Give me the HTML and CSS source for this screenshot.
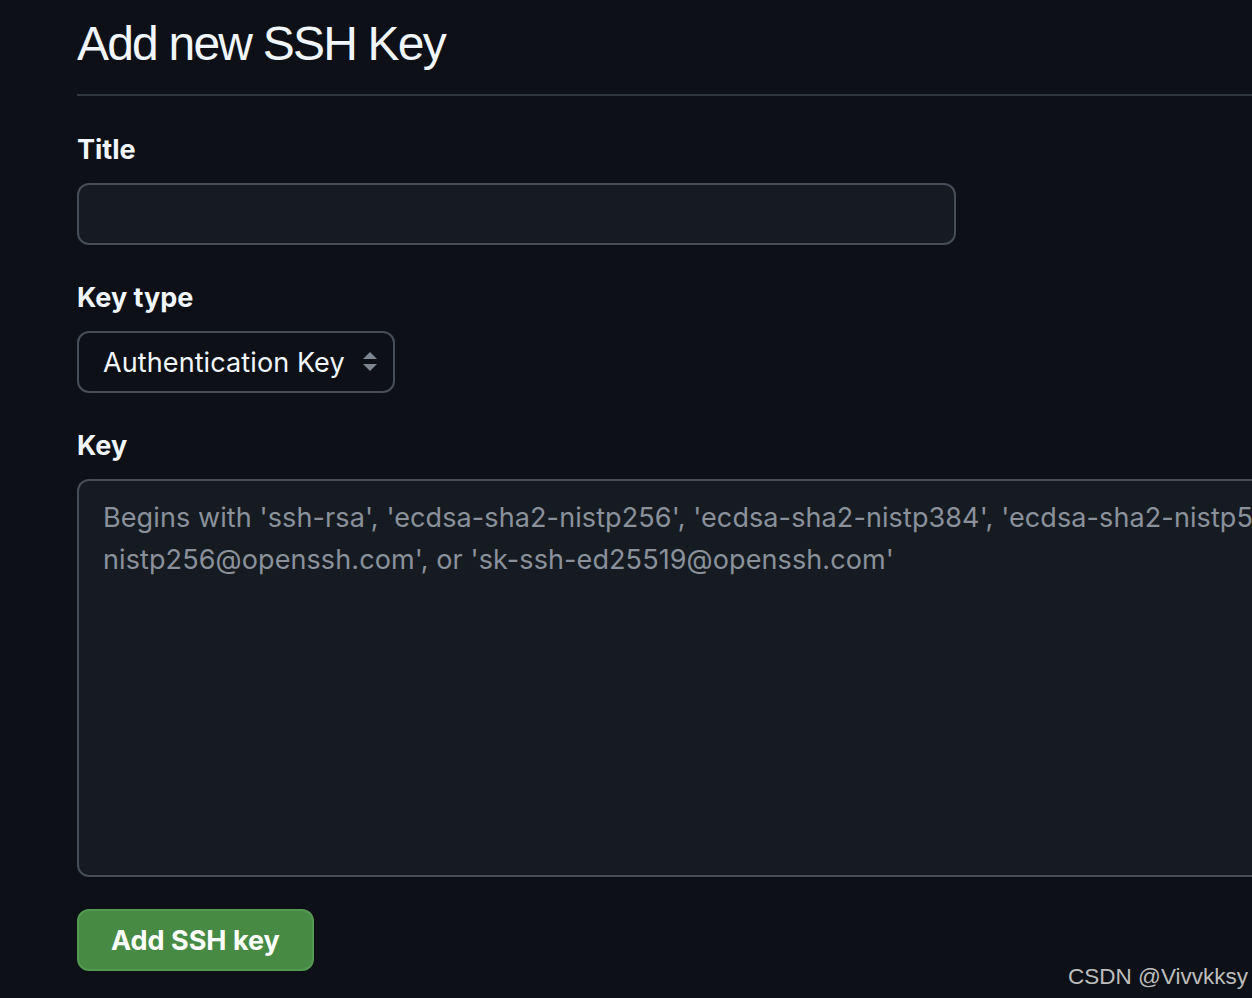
FILE: index.html
```html
<!DOCTYPE html>
<html lang="en">
<head>
<meta charset="utf-8">
<title>Add new SSH Key</title>
<link rel="stylesheet" href="styles.css">
</head>
<body>
<main class="page">
  <div class="subhead">
    <h1 class="subhead-heading">Add new SSH Key</h1>
  </div>
  <form class="ssh-form">
    <div class="form-group">
      <label class="form-label" for="title">Title</label>
      <input class="form-input title-input" id="title" type="text">
    </div>
    <div class="form-group">
      <label class="form-label" for="type">Key type</label>
      <div class="select-wrap">
        <select class="form-select" id="type">
          <option>Authentication Key</option>
          <option>Signing Key</option>
        </select>
        <svg class="select-arrows" width="16" height="24" viewBox="0 0 16 24" aria-hidden="true">
          <path d="M8 2 L15 9 L1 9 Z" fill="#7d8590"/>
          <path d="M1 14 L15 14 L8 21 Z" fill="#7d8590"/>
        </svg>
      </div>
    </div>
    <div class="form-group">
      <label class="form-label" for="key">Key</label>
      <textarea class="form-input key-input" id="key" placeholder="Begins with 'ssh-rsa', 'ecdsa-sha2-nistp256', 'ecdsa-sha2-nistp384', 'ecdsa-sha2-nistp521', 'ssh-ed25519', 'sk-ecdsa-sha2-&#10;nistp256@openssh.com', or 'sk-ssh-ed25519@openssh.com'"></textarea>
    </div>
    <div class="form-actions">
      <button class="btn-primary" type="button">Add SSH key</button>
    </div>
  </form>
</main>
<div class="watermark">CSDN @Vivvkksy</div>
</body>
</html>
```

FILE: styles.css
```css
html, body {
  margin: 0;
  padding: 0;
  background: #0d1117;
  overflow: hidden;
  height: 100%;
}

body {
  font-family: Inter, "Noto Sans", "Liberation Sans", sans-serif;
  color: #f0f6fc;
}

.page {
  padding-left: 77px;
  width: 1800px;
}

.subhead {
  border-bottom: 2px solid #30363d;
  padding-top: 14px;
  padding-bottom: 20px;
}

.subhead-heading {
  margin: 0;
  font-family: "Liberation Sans", Arial, sans-serif;
  font-weight: 400;
  font-size: 48px;
  line-height: 60px;
  letter-spacing: -1.8px;
  color: #f0f6fc;
}

.ssh-form {
  display: flex;
  flex-direction: column;
  gap: 30px;
  padding-top: 31px;
}

.form-group {
  display: flex;
  flex-direction: column;
  align-items: flex-start;
}

.form-label {
  font-size: 27px;
  font-weight: 700;
  line-height: 40px;
  padding-top: 3px;
  margin-bottom: 13px;
  color: #f0f6fc;
}

.form-input {
  box-sizing: border-box;
  background: #161b22;
  border: 2px solid #474d56;
  border-radius: 12px;
  color: #f0f6fc;
  font-family: Inter, "Noto Sans", "Liberation Sans", sans-serif;
  font-size: 27px;
  letter-spacing: 0.1px;
  outline: none;
}

.title-input {
  width: 879px;
  height: 62px;
  padding: 0 24px;
}

.select-wrap {
  position: relative;
}

.form-select {
  appearance: none;
  -webkit-appearance: none;
  box-sizing: border-box;
  width: 318px;
  height: 62px;
  padding: 0 10px 0 24px;
  background: #0d1117;
  border: 2px solid #474d56;
  border-radius: 12px;
  color: #f0f6fc;
  font-family: Inter, "Noto Sans", "Liberation Sans", sans-serif;
  font-size: 27px;
  letter-spacing: 0.1px;
  outline: none;
}

.select-arrows {
  position: absolute;
  right: 17px;
  top: 19px;
  pointer-events: none;
}

.key-input {
  width: 1500px;
  height: 398px;
  padding: 16px 24px 12px;
  line-height: 42px;
  resize: none;
  white-space: pre;
  overflow: hidden;
}

.key-input::placeholder {
  color: #8a919b;
  opacity: 1;
}

.form-actions {
  padding-top: 2px;
}

.btn-primary {
  box-sizing: border-box;
  height: 62px;
  padding: 0 32px;
  background: #468a44;
  border: 2px solid #539952;
  border-radius: 12px;
  color: #ffffff;
  font-family: Inter, "Noto Sans", "Liberation Sans", sans-serif;
  font-size: 27px;
  font-weight: 700;
  cursor: pointer;
}

.watermark {
  position: absolute;
  right: 4px;
  bottom: 8px;
  font-family: "Liberation Sans", Arial, sans-serif;
  font-size: 22.5px;
  color: #bdbdbd;
}
```
